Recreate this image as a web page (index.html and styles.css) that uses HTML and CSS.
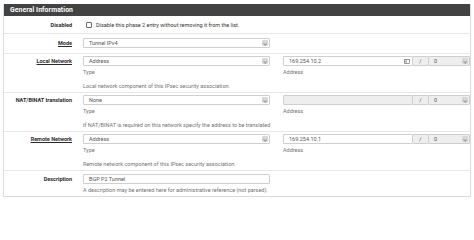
FILE: index.html
```html
<!DOCTYPE html>
<html>
<head>
<meta charset="utf-8">
<link rel="stylesheet" href="styles.css">
</head>
<body>
<div class="panel">
  <div class="panel-heading">General Information</div>
  <div class="row row-check">
    <div class="label">Disabled</div>
    <div class="ctrl">
      <label class="check"><span class="box"></span>Disable this phase 2 entry without removing it from the list.</label>
    </div>
  </div>
  <div class="row row-single">
    <div class="label"><span class="req">Mode</span></div>
    <div class="ctrl">
      <div class="line">
        <div class="select w-main">Tunnel IPv4<span class="arrow"></span></div>
      </div>
    </div>
  </div>
  <div class="row">
    <div class="label"><span class="req">Local Network</span></div>
    <div class="ctrl">
      <div class="line">
        <div class="col">
          <div class="select w-main">Address<span class="arrow"></span></div>
          <div class="hint">Type</div>
        </div>
        <div class="col col-right">
          <div class="group">
            <div class="input w-addr">169.254.10.2<svg class="icon" width="6" height="5" viewBox="0 0 6 5"><rect x="0.5" y="0.5" width="5" height="4" fill="none" stroke="#888" stroke-width="0.8"/><line x1="2.2" y1="0.5" x2="2.2" y2="4.5" stroke="#888" stroke-width="0.8"/><line x1="0.5" y1="2.5" x2="2.2" y2="2.5" stroke="#888" stroke-width="0.6"/></svg></div>
            <div class="addon">/</div>
            <div class="select w-mask disabled">0<span class="arrow"></span></div>
          </div>
          <div class="hint">Address</div>
        </div>
      </div>
      <div class="help">Local network component of this IPsec security association.</div>
    </div>
  </div>
  <div class="row">
    <div class="label">NAT/BINAT translation</div>
    <div class="ctrl">
      <div class="line">
        <div class="col">
          <div class="select w-main">None<span class="arrow"></span></div>
          <div class="hint">Type</div>
        </div>
        <div class="col col-right">
          <div class="group">
            <div class="input w-addr disabled"></div>
            <div class="addon">/</div>
            <div class="select w-mask disabled">0<span class="arrow"></span></div>
          </div>
          <div class="hint">Address</div>
        </div>
      </div>
      <div class="help">If NAT/BINAT is required on this network specify the address to be translated</div>
    </div>
  </div>
  <div class="row">
    <div class="label"><span class="req">Remote Network</span></div>
    <div class="ctrl">
      <div class="line">
        <div class="col">
          <div class="select w-main">Address<span class="arrow"></span></div>
          <div class="hint">Type</div>
        </div>
        <div class="col col-right">
          <div class="group">
            <div class="input w-addr">169.254.10.1</div>
            <div class="addon">/</div>
            <div class="select w-mask disabled">0<span class="arrow"></span></div>
          </div>
          <div class="hint">Address</div>
        </div>
      </div>
      <div class="help">Remote network component of this IPsec security association.</div>
    </div>
  </div>
  <div class="row row-last">
    <div class="label">Description</div>
    <div class="ctrl">
      <div class="input w-main">BGP P2 Tunnel</div>
      <div class="help help-tight">A description may be entered here for administrative reference (not parsed).</div>
    </div>
  </div>
</div>
</body>
</html>
```

FILE: styles.css
```css
html, body {
  margin: 0;
  padding: 0;
  background: #ffffff;
}
body {
  font-family: Roboto, "Liberation Sans", sans-serif;
  font-size: 5.5px;
  color: #333333;
}
.panel {
  margin: 4px 3px 0 3px;
  border: 1px solid #dcdcdc;
  border-top: none;
  box-shadow: 0 1px 1px rgba(0,0,0,0.05);
}
.panel-heading {
  background: #424242;
  color: #ffffff;
  font-weight: bold;
  font-size: 6.8px;
  height: 12px;
  line-height: 12px;
  padding-left: 6px;
  letter-spacing: 0.1px;
}
.row {
  display: grid;
  grid-template-columns: 72px 1fr;
  border-top: 1px solid #e6e6e6;
  padding: 2px 0 2px;
}
.row-check {
  border-top: none;
  padding: 5px 0 4px;
}
.row-single {
  padding: 4px 0 5px;
}
.row-last {
  padding: 3px 0 2px;
}
.label {
  text-align: right;
  padding-right: 4px;
  font-weight: bold;
  line-height: 10px;
  color: #2b2b2b;
}
.row-check .label {
  line-height: 8px;
}
.req {
  text-decoration: underline;
}
.ctrl {
  padding-left: 7px;
}
.check {
  display: flex;
  align-items: center;
  line-height: 8px;
  height: 8px;
}
.box {
  width: 4px;
  height: 4px;
  border: 1px solid #666;
  border-radius: 1px;
  margin: 0 4px 0 3px;
  background: #fff;
}
.line {
  display: flex;
}
.col {
  display: flex;
  flex-direction: column;
}
.col-right {
  margin-left: 13px;
}
.group {
  display: flex;
}
.select, .input {
  position: relative;
  box-sizing: border-box;
  height: 10px;
  line-height: 8px;
  border: 1px solid #cfcfcf;
  border-radius: 1px;
  padding-left: 5px;
  color: #555;
  background: #fff;
}
.select.disabled, .input.disabled {
  background: #eeeeee;
}
.w-main { width: 187px; }
.w-addr { width: 130px; }
.w-mask { width: 42px; }
.arrow {
  position: absolute;
  right: 1px;
  top: 1px;
  width: 6px;
  height: 6px;
  background: #d8d8d8;
  border-radius: 1px;
}
.arrow::after {
  content: "";
  position: absolute;
  left: 2px;
  top: 1.5px;
  width: 1.5px;
  height: 1.5px;
  border-right: 0.6px solid #999;
  border-bottom: 0.6px solid #999;
  transform: rotate(45deg);
}
.icon {
  position: absolute;
  right: 2px;
  top: 1.5px;
}
.addon {
  box-sizing: border-box;
  width: 15px;
  height: 10px;
  line-height: 8px;
  background: #eeeeee;
  border-top: 1px solid #cfcfcf;
  border-bottom: 1px solid #cfcfcf;
  text-align: center;
  color: #555;
}
.hint {
  color: #737373;
  line-height: 8px;
  margin-top: 2px;
}
.help {
  color: #737373;
  line-height: 8px;
  margin-top: 6px;
}
.help-tight {
  margin-top: 2px;
}
```
